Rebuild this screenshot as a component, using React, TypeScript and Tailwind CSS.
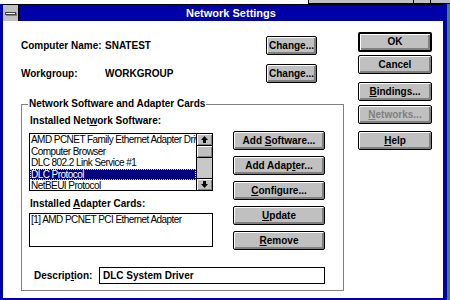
import React from 'react';
import clsx from 'clsx';

const Btn: React.FC<{ className?: string; def?: boolean; disabled?: boolean; children: React.ReactNode }> = ({
  className,
  def,
  disabled,
  children,
}) => (
  <div
    className={clsx(
      'flex items-center justify-center bg-[#c0c0c0] rounded-[2px] text-[10px] font-bold leading-none shadow-[inset_1px_1px_0_#fff,inset_-2px_-2px_0_#808080]',
      def ? 'border-2 border-black' : 'border border-black',
      disabled ? 'text-[#808080]' : 'text-black',
      className
    )}
  >
    <span>{children}</span>
  </div>
);

const Arrow: React.FC<{ down?: boolean }> = ({ down }) => (
  <svg width="7" height="7" viewBox="0 0 7 7" className={down ? 'rotate-180' : ''}>
    <polygon points="3.5,0 7,4 5,4 5,7 2,7 2,4 0,4" fill="#000" />
  </svg>
);

const software = [
  'AMD PCNET Family Ethernet Adapter Driver',
  'Computer Browser',
  'DLC 802.2 Link Service #1',
  'DLC Protocol',
  'NetBEUI Protocol',
];

export default function App() {
  return (
    <div className="w-[450px] h-[300px] bg-white flex flex-col overflow-hidden font-['Liberation_Sans',Arial,sans-serif]">
      {/* strip of the window behind */}
      <div className="h-[4px] flex">
        <div className="flex-1" />
        <div className="w-[142px] flex bg-[#c0c0c0] border-b border-black">
          <div className="w-[105px] border-l border-black" />
          <div className="w-[17px] border-l border-black" />
          <div className="flex-1 border-l border-black" />
        </div>
      </div>

      <div className="flex-1 flex">
        <div className="w-[447px] flex flex-col border-l-[3px] border-r-[4px] border-b-[2px] border-[#0000a8]">
          {/* title bar */}
          <div className="h-[17px] flex border-t border-black">
            <div className="w-[16px] bg-[#c0c0c0] border-r border-black flex items-center justify-center">
              <div className="w-[11px] h-[3px] bg-white border border-[#404040] shadow-[1px_1px_0_#808080]" />
            </div>
            <div className="flex-1 bg-[#0000a8] flex items-center justify-center text-white text-[11px] font-bold leading-none">
              Network Settings
            </div>
          </div>

          {/* client */}
          <div className="flex-1 flex text-black">
            <div className="w-[341px] pl-[18px] flex flex-col">
              <div className="mt-[15px] w-[296px] h-[19px] flex items-center text-[10px] font-bold">
                <span className="w-[84px]">Computer Name:</span>
                <span className="flex-1">SNATEST</span>
                <Btn className="w-[51px] h-[19px]">Change...</Btn>
              </div>
              <div className="mt-[9px] w-[296px] h-[19px] flex items-center text-[10px] font-bold">
                <span className="w-[84px]">Workgroup:</span>
                <span className="flex-1">WORKGROUP</span>
                <Btn className="w-[51px] h-[19px]">
                  Chan<u>g</u>e...
                </Btn>
              </div>

              {/* group box */}
              <div className="mt-[21px] w-[323px] h-[187px] border border-[#808080] relative flex flex-col">
                <span className="absolute -top-[7px] left-[6px] bg-white px-[1px] text-[10px] font-bold leading-[12px]">
                  Network Software and Adapter Cards
                </span>
                <div className="flex pt-[10px] pl-[7px]">
                  <div className="w-[184px] flex flex-col">
                    <div className="h-[12px] leading-[12px] pl-[1px] text-[10px] font-bold">
                      Installed Net<u>w</u>ork Software:
                    </div>
                    <div className="mt-[6px] h-[58px] border border-black flex">
                      <div className="flex-1 overflow-hidden text-[10px] tracking-[-0.55px]">
                        {software.map((s) => (
                          <div
                            key={s}
                            className={clsx(
                              'h-[11.5px] leading-[11.5px] pl-[1px] whitespace-nowrap',
                              s === 'DLC Protocol' &&
                                'bg-[#000080] text-white outline-1 outline-dotted outline-[#e0e060] -outline-offset-1'
                            )}
                          >
                            {s}
                          </div>
                        ))}
                      </div>
                      <div className="w-[16px] border-l border-black flex flex-col bg-[#c0c0c0]">
                        <div className="h-[12px] border-b border-black flex items-center justify-center shadow-[inset_1px_1px_0_#fff,inset_-1px_-1px_0_#808080]">
                          <Arrow />
                        </div>
                        <div className="h-[12px] border-b border-black shadow-[inset_1px_1px_0_#fff,inset_-1px_-1px_0_#808080]" />
                        <div className="flex-1 bg-[#c8c8c8]" />
                        <div className="h-[12px] border-t border-black flex items-center justify-center shadow-[inset_1px_1px_0_#fff,inset_-1px_-1px_0_#808080]">
                          <Arrow down />
                        </div>
                      </div>
                    </div>
                    <div className="mt-[7px] h-[12px] leading-[12px] pl-[1px] text-[10px] font-bold">
                      Installed <u>A</u>dapter Cards:
                    </div>
                    <div className="mt-[3px] h-[34px] border border-black px-[1px] text-[10px] tracking-[-0.55px] leading-[12px]">
                      [1] AMD PCNET PCI Ethernet Adapter
                    </div>
                  </div>
                  <div className="ml-[20px] mt-[16px] w-[92px] flex flex-col gap-[6px]">
                    <Btn className="h-[19px]">
                      Add <u>S</u>oftware...
                    </Btn>
                    <Btn className="h-[19px]">
                      Add Adap<u>t</u>er...
                    </Btn>
                    <Btn className="h-[19px]">
                      <u>C</u>onfigure...
                    </Btn>
                    <Btn className="h-[19px]">
                      <u>U</u>pdate
                    </Btn>
                    <Btn className="h-[19px]">
                      <u>R</u>emove
                    </Btn>
                  </div>
                </div>
                <div className="mt-[17px] pl-[12px] flex items-center text-[10px] font-bold">
                  <span className="w-[65px]">
                    Descrip<u>t</u>ion:
                  </span>
                  <div className="w-[226px] h-[17px] border border-black px-[3px] flex items-center">
                    DLC System Driver
                  </div>
                </div>
              </div>
            </div>

            {/* right buttons */}
            <div className="ml-[14px] w-[74px] flex flex-col">
              <Btn def className="mt-[11px] h-[20px]">OK</Btn>
              <Btn className="mt-[3px] h-[19px]">Cancel</Btn>
              <Btn className="mt-[8px] h-[19px]">
                <u>B</u>indings...
              </Btn>
              <Btn disabled className="mt-[4px] h-[19px]">
                <u>N</u>etworks...
              </Btn>
              <Btn className="mt-[7px] h-[19px]">
                <u>H</u>elp
              </Btn>
            </div>
          </div>
        </div>
        <div className="w-[3px] bg-[#408080]" />
      </div>
    </div>
  );
}
